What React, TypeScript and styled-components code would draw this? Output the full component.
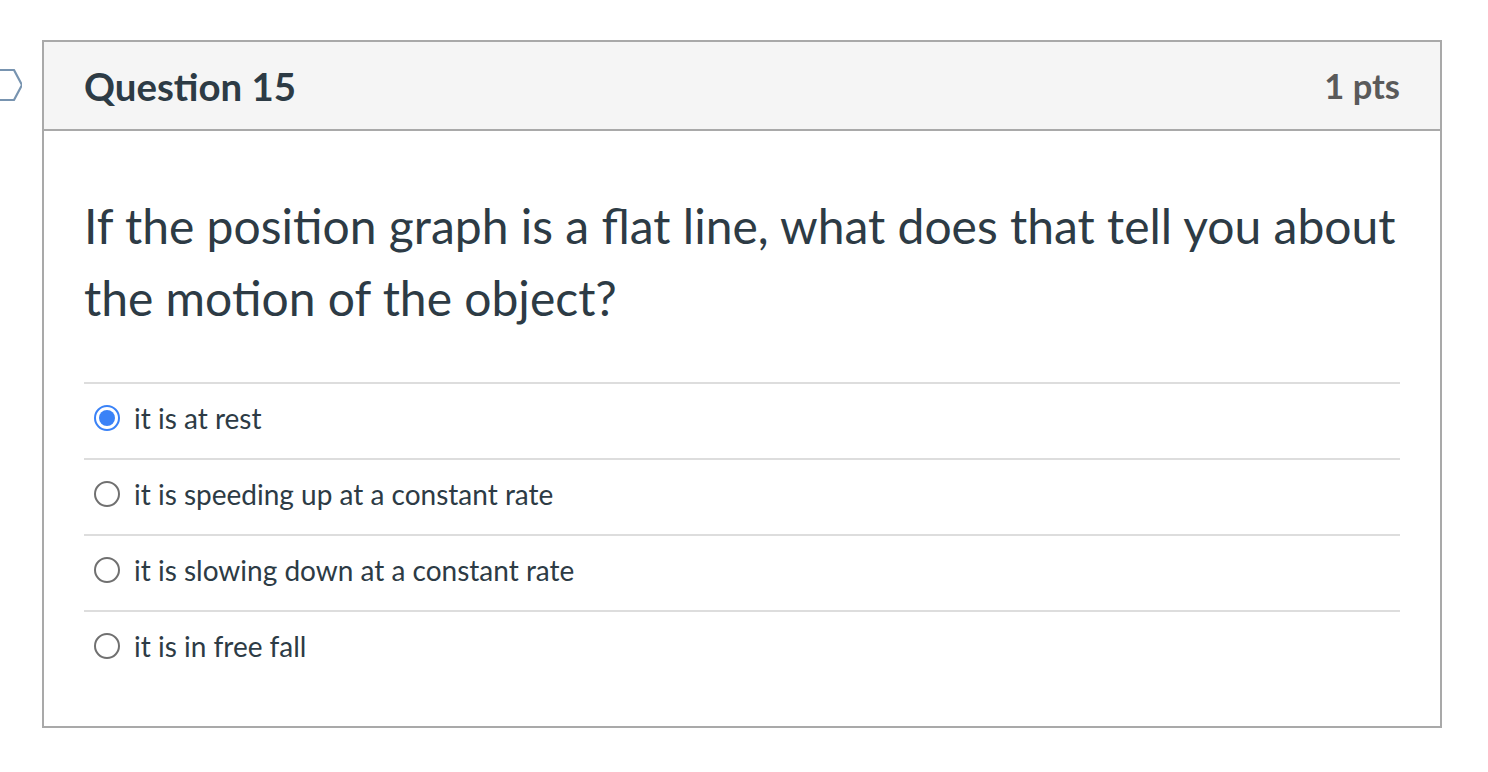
import React from "react";
import styled, { createGlobalStyle } from "styled-components";

const Global = createGlobalStyle`
  html, body { margin: 0; padding: 0; background: #ffffff; }
  body { font-family: Lato, "Open Sans", "Liberation Sans", sans-serif; color: #2d3b45; }
`;

const Page = styled.div`
  display: flex;
  align-items: flex-start;
  padding-top: 40px;
  width: 1488px;
  height: 772px;
  box-sizing: border-box;
`;

const Gutter = styled.div`
  width: 42px;
  flex: none;
  display: flex;
  justify-content: flex-start;
  padding-top: 29px;
`;

const Card = styled.section`
  width: 1400px;
  height: 688px;
  box-sizing: border-box;
  border: 2px solid #a9a9a9;
  display: flex;
  flex-direction: column;
`;

const Header = styled.header`
  height: 89px;
  box-sizing: border-box;
  background: #f5f5f5;
  border-bottom: 2px solid #a9a9a9;
  display: flex;
  align-items: center;
  justify-content: space-between;
  padding: 0 40px 0 40px;
`;

const Title = styled.h2`
  margin: 0;
  font-size: 38.4px;
  font-weight: 700;
  color: #2d3b45;
`;

const Points = styled.div`
  font-size: 34.5px;
  font-weight: 700;
  color: #5a5a5a;
`;

const Body = styled.div`
  padding: 59px 40px 0 40px;
  display: flex;
  flex-direction: column;
`;

const QuestionText = styled.p`
  margin: 0;
  font-size: 48px;
  line-height: 72px;
  color: #2d3b45;
`;

const Answers = styled.div`
  margin-top: 48px;
  display: flex;
  flex-direction: column;
`;

const AnswerRow = styled.label`
  height: 76px;
  box-sizing: border-box;
  border-top: 2px solid #dddddd;
  display: flex;
  align-items: center;
  gap: 14px;
  padding-left: 10px;
  padding-bottom: 6px;
  font-size: 28px;
  color: #2d3b45;
`;

const Radio = styled.span<{ $checked?: boolean }>`
  width: 26px;
  height: 26px;
  box-sizing: border-box;
  border-radius: 50%;
  border: 2px solid ${(p) => (p.$checked ? "#3a82f7" : "#707070")};
  display: flex;
  align-items: center;
  justify-content: center;
  background: #fff;
  &::after {
    content: "";
    display: ${(p) => (p.$checked ? "block" : "none")};
    width: 16px;
    height: 16px;
    border-radius: 50%;
    background: #3a82f7;
  }
`;

const answers = [
  { text: "it is at rest", checked: true },
  { text: "it is speeding up at a constant rate", checked: false },
  { text: "it is slowing down at a constant rate", checked: false },
  { text: "it is in free fall", checked: false },
];

const Flag = () => (
  <svg width="26" height="34" viewBox="0 0 26 34" style={{ marginLeft: -4 }}>
    <path d="M0 1 H18 L26 16 L18 31 H0" fill="none" stroke="#7894b0" strokeWidth="2.2" strokeLinejoin="round" />
  </svg>
);

export default function App() {
  return (
    <>
      <Global />
      <Page>
        <Gutter>
          <Flag />
        </Gutter>
        <Card>
          <Header>
            <Title>Question 15</Title>
            <Points>1 pts</Points>
          </Header>
          <Body>
            <QuestionText>
              If the position graph is a flat line, what does that tell you about the motion of the object?
            </QuestionText>
            <Answers>
              {answers.map((a) => (
                <AnswerRow key={a.text}>
                  <Radio $checked={a.checked} />
                  {a.text}
                </AnswerRow>
              ))}
            </Answers>
          </Body>
        </Card>
      </Page>
    </>
  );
}
